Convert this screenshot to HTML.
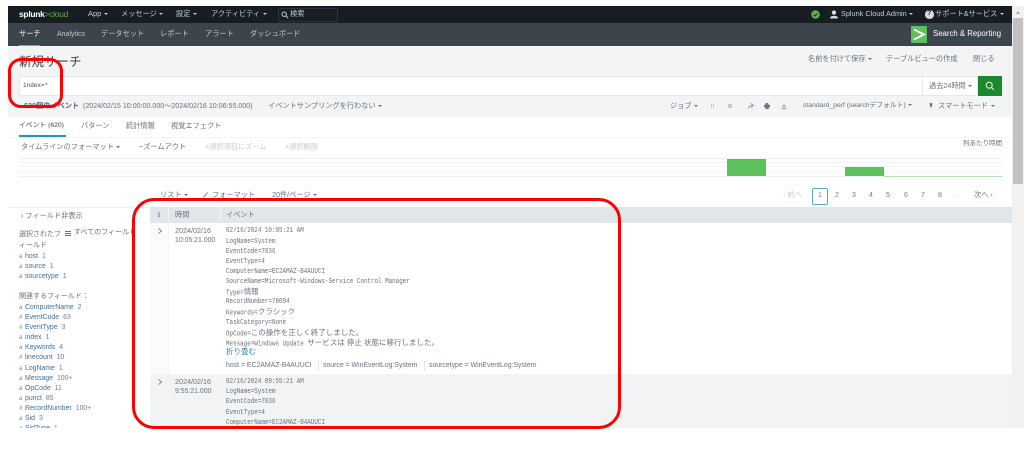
<!DOCTYPE html>
<html lang="ja"><head><meta charset="utf-8">
<style>
html,body{margin:0;padding:0;background:#fff;width:1026px;height:464px;overflow:hidden}
body{font-family:"Liberation Sans","Noto Sans CJK JP",sans-serif;position:relative}
#w{position:absolute;left:0;top:0;width:1026px;height:464px;overflow:hidden;filter:blur(.35px)}
.b{position:absolute}
.t{position:absolute;white-space:nowrap;line-height:10px;height:10px;font-size:7.2px;color:#68727d}
.n{color:#c3cbd4}
.m{font-family:"Liberation Mono","Noto Sans CJK JP",monospace;font-size:5.9px;color:#68727d;left:226px;transform:scaleY(1.18);transform-origin:left center}
.m span{font-family:"Liberation Sans","Noto Sans CJK JP",sans-serif;font-size:7.5px;display:inline-block;transform:scaleY(.85)}
.f{left:25px;font-size:6.9px;color:#3f7099}
.f i{font-style:normal;color:#717c88;margin-left:4px}
.f b{position:absolute;left:-6px;font-weight:400;color:#7a8591;font-size:6px;font-style:italic}
.c::after{content:"";display:inline-block;margin-left:2.5px;vertical-align:1px;border-left:2px solid transparent;border-right:2px solid transparent;border-top:2.5px solid currentColor}
.p{font-size:7px;width:16px;text-align:center;color:#717c88}
</style></head><body><div id="w">
<div class="b" style="left:8px;top:6px;width:1004px;height:17px;background:#171d21"></div>
<div class="b" style="left:8px;top:23px;width:1004px;height:23px;background:#3c444d"></div>
<div class="b" style="left:8px;top:46px;width:1004px;height:71px;background:#f2f4f5"></div>
<div class="b" style="left:8px;top:117px;width:1004px;height:257px;background:#fff"></div>
<div class="b" style="left:8px;top:374px;width:1004px;height:54px;background:#fff"></div>
<div class="b" style="left:150px;top:374px;width:862px;height:54px;background:#f1f3f5"></div>
<div class="b" style="left:1012px;top:6px;width:12px;height:422px;background:#f1f1f1"></div>
<div class="b" style="left:1013px;top:18px;width:10px;height:166px;background:#c1c1c1"></div>
<div class="b" style="left:1016px;top:11px;border-left:2.5px solid transparent;border-right:2.5px solid transparent;border-bottom:3px solid #a5a5a5"></div>

<!-- top bar -->
<div class="t" style="left:19px;top:9px;font-size:8.5px;font-weight:700;color:#fff;letter-spacing:-.3px">splunk<span style="color:#65a637;font-weight:400">&gt;cloud</span></div>
<div class="t n c" style="left:88px;top:9px;font-size:7.5px">App</div>
<div class="t n c" style="left:121px;top:9px">メッセージ</div>
<div class="t n c" style="left:176px;top:9px">設定</div>
<div class="t n c" style="left:211px;top:9px">アクティビティ</div>
<div class="b" style="left:278px;top:8px;width:60px;height:14px;background:#171d21;border:1px solid #2d353c;box-sizing:border-box"></div>
<svg class="b" style="left:281px;top:11px" width="8" height="8" viewBox="0 0 8 8"><circle cx="3.2" cy="3.2" r="2.2" fill="none" stroke="#c3cbd4" stroke-width="1"/><path d="M5 5l2.2 2.2" stroke="#c3cbd4" stroke-width="1"/></svg>
<div class="t n" style="left:290px;top:9px">検索</div>
<svg class="b" style="left:811px;top:10px" width="9" height="9" viewBox="0 0 9 9"><circle cx="4.5" cy="4.5" r="4.3" fill="#5cb14a"/><path d="M2.6 4.6l1.4 1.4 2.4-2.6" fill="none" stroke="#16351a" stroke-width="1"/></svg>
<svg class="b" style="left:830px;top:10px" width="8" height="9" viewBox="0 0 8 9"><circle cx="4" cy="2.6" r="2.2" fill="#d5dbe0"/><path d="M0 8.500c0-2.200 2-2.600 4-2.600s4 .4 4 2.600z" fill="#d5dbe0"/></svg>
<div class="t n c" style="left:841px;top:9px;font-size:7.3px">Splunk Cloud Admin</div>
<div class="b" style="left:925px;top:10px;width:8.500px;height:8.500px;border-radius:50%;background:#d5dbe0;color:#171d21;font-size:7px;font-weight:700;line-height:8.500px;text-align:center">?</div>
<div class="t n c" style="left:935px;top:9px">サポート&amp;サービス</div>

<!-- app nav -->
<div class="t" style="left:19px;top:29px;color:#fff">サーチ</div>
<div class="b" style="left:19px;top:45px;width:21px;height:1px;background:#65c05a"></div>
<div class="t n" style="left:57px;top:30px;font-size:7px">Analytics</div>
<div class="t n" style="left:101px;top:29px">データセット</div>
<div class="t n" style="left:160px;top:29px">レポート</div>
<div class="t n" style="left:205px;top:29px">アラート</div>
<div class="t n" style="left:250px;top:29px">ダッシュボード</div>
<div class="b" style="left:911px;top:26px;width:16px;height:17px;background:#5cc05c"></div>
<svg class="b" style="left:911px;top:26px" width="16" height="17" viewBox="0 0 16 17"><path d="M3 3.500l10 5-10 5" fill="none" stroke="#fff" stroke-width="2"/></svg>
<div class="t" style="left:933px;top:29px;color:#fff;font-size:7.800px">Search &amp; Reporting</div>

<!-- title row -->
<div class="t" style="left:19px;top:56px;font-size:12.500px;line-height:12px;height:12px;color:#3c444d">新規サーチ</div>
<div class="t c" style="left:808px;top:54px">名前を付けて保存</div>
<div class="t" style="left:886px;top:54px">テーブルビューの作成</div>
<div class="t" style="left:973px;top:54px">閉じる</div>

<!-- search -->
<div class="b" style="left:19px;top:76px;width:959px;height:20px;background:#fff;border:1px solid #e6e9ec;box-sizing:border-box"></div>
<div class="t" style="left:23px;top:81px;font-family:'Liberation Mono',monospace;font-size:6px;color:#444">index=*</div>
<div class="b" style="left:922px;top:77px;width:1px;height:18px;background:#e6e9ec"></div>
<div class="t c" style="left:929px;top:81px;font-size:7.200px">過去24時間</div>
<div class="b" style="left:978px;top:76px;width:24px;height:20px;background:#1a8929"></div>
<svg class="b" style="left:985px;top:81px" width="10" height="10" viewBox="0 0 10 10"><circle cx="4.200" cy="4.200" r="3" fill="none" stroke="#fff" stroke-width="1"/><path d="M6.400 6.400l2.600 2.600" stroke="#fff" stroke-width="1"/></svg>

<!-- status row -->
<div class="t" style="left:24px;top:101px;font-weight:700;color:#5c6773">620個のイベント</div>
<div class="t" style="left:83px;top:101px;font-size:7.100px">(2024/02/15 10:00:00.000～2024/02/16 10:06:55.000)</div>
<div class="t c" style="left:268px;top:101px">イベントサンプリングを行わない</div>
<div class="t c" style="left:670px;top:101px">ジョブ</div>
<div class="b" style="left:711px;top:104px;width:1px;height:4px;background:#c3cbd4;box-shadow:2px 0 0 #c3cbd4"></div>
<div class="b" style="left:728px;top:104px;width:4px;height:4px;background:#c3cbd4"></div>
<svg class="b" style="left:748px;top:103px" width="6" height="6" viewBox="0 0 6 6"><path d="M.5 5.500C1 3 2.500 2.500 4 2.500M3 .5l2.500 2-2.500 2" fill="none" stroke="#717c88" stroke-width=".8"/></svg>
<svg class="b" style="left:764px;top:103px" width="6" height="6" viewBox="0 0 7 7"><path d="M2 0h3v2h2v3H5.500v2h-4V5H0V2h2z" fill="#6b7480"/></svg>
<svg class="b" style="left:781px;top:103px" width="6" height="6" viewBox="0 0 7 7"><path d="M3.500 0v5M1.500 3l2 2 2-2M.5 6.500h6" fill="none" stroke="#a59a7e" stroke-width=".9"/></svg>
<div class="t c" style="left:803px;top:101px;font-size:6.800px">standard_perf (searchデフォルト)</div>
<svg class="b" style="left:929px;top:103px" width="4" height="6" viewBox="0 0 5 7"><path d="M.5 0h4L3.500 2.500 4.500 4h-1.500L2.500 7 2 4H.5l1-1.500z" fill="#5c6773"/></svg>
<div class="t c" style="left:938px;top:101px">スマートモード</div>

<!-- tabs -->
<div class="t" style="left:19px;top:121px;color:#3c444d;font-size:6.800px">イベント (620)</div>
<div class="b" style="left:19px;top:135px;width:47px;height:1.500px;background:#1e93c6"></div>
<div class="t" style="left:81px;top:121px">パターン</div>
<div class="t" style="left:126px;top:121px">統計情報</div>
<div class="t" style="left:171px;top:121px">視覚エフェクト</div>
<div class="b" style="left:8px;top:137px;width:1004px;height:1px;background:#f2f4f5"></div>

<!-- timeline -->
<div class="t c" style="left:21px;top:142px">タイムラインのフォーマット</div>
<div class="t" style="left:139px;top:142px">−ズームアウト</div>
<div class="t" style="left:205px;top:142px;color:#c3cbd4">+選択項目にズーム</div>
<div class="t" style="left:285px;top:142px;color:#c3cbd4">×選択解除</div>
<div class="t" style="left:963px;top:139px;font-size:6.500px">列あたり時間</div>
<div class="b" style="left:19px;top:158px;width:983px;height:1px;background:#eef0f2"></div>
<div class="b" style="left:19px;top:162px;width:983px;height:1px;background:#f2f4f5"></div>
<div class="b" style="left:19px;top:166px;width:983px;height:1px;background:#f2f4f5"></div>
<div class="b" style="left:19px;top:172px;width:983px;height:1px;background:#f2f4f5"></div>
<div class="b" style="left:19px;top:176px;width:983px;height:1px;background:#eef0f2"></div>
<div class="b" style="left:727px;top:159px;width:39px;height:17px;background:#5cc05c"></div>
<div class="b" style="left:845px;top:167px;width:39px;height:9px;background:#5cc05c"></div>
<div class="b" style="left:884px;top:176px;width:118px;height:1px;background:#b5dfb5"></div>

<!-- list toolbar -->
<div class="t c" style="left:160px;top:190px">リスト</div>
<svg class="b" style="left:203px;top:192px" width="6" height="6" viewBox="0 0 6 6"><path d="M.5 5.500L4.500.5" fill="none" stroke="#68727d" stroke-width="1"/></svg>
<div class="t" style="left:212px;top:190px">フォーマット</div>
<div class="t c" style="left:272px;top:190px">20件/ページ</div>
<div class="t" style="left:783px;top:190px;color:#c3cbd4">‹ 前へ</div>
<div class="b" style="left:812px;top:188px;width:16px;height:17px;border:1px solid #5fa3d0;border-radius:2px;box-sizing:border-box"></div>
<div class="t p" style="left:812px;top:191px">1</div>
<div class="t p" style="left:829px;top:191px">2</div>
<div class="t p" style="left:846px;top:191px">3</div>
<div class="t p" style="left:863px;top:191px">4</div>
<div class="t p" style="left:880px;top:191px">5</div>
<div class="t p" style="left:898px;top:191px">6</div>
<div class="t p" style="left:915px;top:191px">7</div>
<div class="t p" style="left:932px;top:191px">8</div>
<div class="t p" style="left:949px;top:191px;color:#c3cbd4">...</div>
<div class="t" style="left:974px;top:190px">次へ ›</div>

<!-- sidebar -->
<div class="b" style="left:8px;top:207px;width:142px;height:1px;background:#eef0f2"></div>
<div class="t" style="left:21px;top:211px">‹ フィールド非表示</div>
<div class="t" style="left:19px;top:230px;font-size:7px">選択されたフ</div>
<div class="t" style="left:19px;top:241px;font-size:7px">ィールド</div>
<div class="b" style="left:65px;top:231px;width:6px;height:1px;background:#68727d;box-shadow:0 2px 0 #68727d,0 4px 0 #68727d"></div>
<div class="t" style="left:74px;top:228px;font-size:7px">すべてのフィールド</div>
<div class="t f" style="top:252px"><b>a</b>host<i>1</i></div>
<div class="t f" style="top:262px"><b>a</b>source<i>1</i></div>
<div class="t f" style="top:272px"><b>a</b>sourcetype<i>1</i></div>
<div class="t" style="left:19px;top:292px;font-size:7px">関連するフィールド：</div>
<div class="t f" style="top:303px"><b>a</b>ComputerName<i>2</i></div>
<div class="t f" style="top:313px"><b>#</b>EventCode<i>63</i></div>
<div class="t f" style="top:323px"><b>#</b>EventType<i>3</i></div>
<div class="t f" style="top:333px"><b>a</b>index<i>1</i></div>
<div class="t f" style="top:343px"><b>a</b>Keywords<i>4</i></div>
<div class="t f" style="top:353px"><b>#</b>linecount<i>10</i></div>
<div class="t f" style="top:364px"><b>a</b>LogName<i>1</i></div>
<div class="t f" style="top:374px"><b>a</b>Message<i>100+</i></div>
<div class="t f" style="top:384px"><b>a</b>OpCode<i>11</i></div>
<div class="t f" style="top:394px"><b>a</b>punct<i>85</i></div>
<div class="t f" style="top:404px"><b>#</b>RecordNumber<i>100+</i></div>
<div class="t f" style="top:414px"><b>a</b>Sid<i>3</i></div>
<div class="t f" style="top:424px"><b>a</b>SidType<i>1</i></div>

<!-- table -->
<div class="b" style="left:150px;top:207px;width:862px;height:16px;background:#e1e6eb"></div>
<div class="b" style="left:168px;top:207px;width:1px;height:221px;background:#f2f4f5"></div>
<div class="b" style="left:220px;top:207px;width:1px;height:16px;background:#f2f4f5"></div>
<div class="b" style="left:150px;top:223px;width:18px;height:151px;background:#fbfbfc"></div>
<div class="t" style="left:158px;top:210px;font-weight:700;font-size:7px;font-family:'Liberation Serif',serif">i</div>
<div class="t" style="left:175px;top:210px">時間</div>
<div class="t" style="left:226px;top:210px">イベント</div>

<svg class="b" style="left:157px;top:228px" width="6" height="6" viewBox="0 0 6 6"><path d="M1.500 .5l3 2.500-3 2.500" fill="none" stroke="#5c6773" stroke-width=".8"/></svg>
<div class="t" style="left:175px;top:226px">2024/02/16</div>
<div class="t" style="left:175px;top:236px;font-size:6.900px">10:05:21.000</div>
<div class="t m" style="top:226px">02/16/2024 10:05:21 AM</div>
<div class="t m" style="top:237px">LogName=System</div>
<div class="t m" style="top:247px">EventCode=7036</div>
<div class="t m" style="top:257px">EventType=4</div>
<div class="t m" style="top:267px">ComputerName=EC2AMAZ-B4AUUCI</div>
<div class="t m" style="top:277px">SourceName=Microsoft-Windows-Service Control Manager</div>
<div class="t m" style="top:287px">Type=<span>情報</span></div>
<div class="t m" style="top:297px">RecordNumber=78094</div>
<div class="t m" style="top:307px">Keywords=<span>クラシック</span></div>
<div class="t m" style="top:318px">TaskCategory=None</div>
<div class="t m" style="top:328px">OpCode=<span>この操作を正しく終了しました。</span></div>
<div class="t m" style="top:338px">Message=Windows Update <span>サービスは 停止 状態に移行しました。</span></div>
<div class="t" style="left:226px;top:347px;color:#2f7fb5;font-size:7.500px">折り畳む</div>
<div class="t" style="left:226px;top:361px;font-size:6.900px">host = EC2AMAZ-B4AUUCI</div>
<div class="b" style="left:318px;top:361px;width:0;height:10px;border-left:1px dotted #d0d5da"></div>
<div class="t" style="left:323px;top:361px;font-size:6.900px">source = WinEventLog:System</div>
<div class="b" style="left:424px;top:361px;width:0;height:10px;border-left:1px dotted #d0d5da"></div>
<div class="t" style="left:429px;top:361px;font-size:6.900px">sourcetype = WinEventLog:System</div>

<svg class="b" style="left:157px;top:379px" width="6" height="6" viewBox="0 0 6 6"><path d="M1.500 .5l3 2.500-3 2.500" fill="none" stroke="#5c6773" stroke-width=".8"/></svg>
<div class="t" style="left:175px;top:377px">2024/02/16</div>
<div class="t" style="left:175px;top:387px;font-size:6.900px">9:55:21.000</div>
<div class="t m" style="top:377px">02/16/2024 09:55:21 AM</div>
<div class="t m" style="top:387px">LogName=System</div>
<div class="t m" style="top:397px">EventCode=7036</div>
<div class="t m" style="top:408px">EventType=4</div>
<div class="t m" style="top:418px">ComputerName=EC2AMAZ-B4AUUCI</div>

<!-- cover below capture -->
<div class="b" style="left:0;top:428px;width:1026px;height:36px;background:#fff"></div>

<!-- red annotation rectangles -->
<div class="b" style="left:8px;top:58px;width:55px;height:50px;border:3.500px solid #f00;border-radius:13px;box-sizing:border-box"></div>
<div class="b" style="left:132px;top:198px;width:489px;height:231px;border:3.500px solid #f00;border-radius:22px;box-sizing:border-box"></div>
</div></body></html>
